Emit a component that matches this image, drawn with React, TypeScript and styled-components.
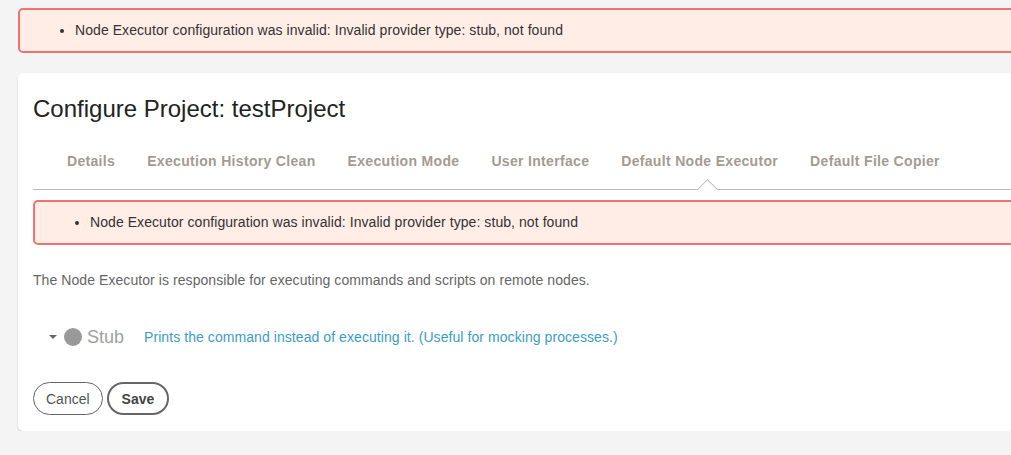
import React from "react";
import styled, { createGlobalStyle } from "styled-components";

const Global = createGlobalStyle`
  html, body { margin: 0; padding: 0; background: #f4f4f4; overflow: hidden; }
  body { font-family: "Liberation Sans", Arial, Helvetica, sans-serif; font-size: 14px; color: #333; letter-spacing: 0.07px; }
  * { box-sizing: border-box; }
`;

const Page = styled.div`
  width: 1100px;
  padding: 8px 0 0 18px;
  display: flex;
  flex-direction: column;
`;

const Alert = styled.div<{ $mb?: number }>`
  background: #ffede6;
  border: 2px solid #f27171;
  border-radius: 5px;
  padding: 10px 15px;
  margin-bottom: ${(p) => p.$mb ?? 0}px;
`;

const AlertList = styled.ul`
  margin: 0;
  padding-left: 40px;
  line-height: 21px;
  color: #333;
`;

const Card = styled.div`
  background: #fff;
  border-radius: 5px;
  box-shadow: 0 1px 2px rgba(0, 0, 0, 0.15);
  padding: 18px 15px 16px 15px;
`;

const Title = styled.h2`
  margin: 0;
  font-size: 24px;
  font-weight: 400;
  line-height: 36px;
  color: #222;
  letter-spacing: 0;
`;

const TabBar = styled.ul`
  list-style: none;
  margin: 14px 0 0 0;
  padding: 0 0 0 18px;
  display: flex;
  border-bottom: 1px solid #bbb;
  height: 49px;
`;

const Tab = styled.li<{ $active?: boolean }>`
  position: relative;
  padding: 0 16px;
  font-weight: 700;
  font-size: 14px;
  letter-spacing: 0.32px;
  color: #a59b92;
  line-height: 40px;
  &::after {
    content: "";
    display: ${(p) => (p.$active ? "block" : "none")};
    position: absolute;
    left: 50%;
    bottom: -8px;
    width: 14px;
    height: 14px;
    background: #fff;
    border-left: 1px solid #bbb;
    border-top: 1px solid #bbb;
    transform: rotate(45deg);
  }
`;

const TabContent = styled.div`
  padding-top: 10px;
`;

const Description = styled.p`
  margin: 25px 0 0 0;
  line-height: 20px;
  color: #666;
`;

const PluginRow = styled.div`
  display: flex;
  align-items: center;
  margin-top: 35px;
  padding-left: 16px;
  height: 24px;
`;

const Caret = styled.span`
  width: 0;
  height: 0;
  border-left: 4px solid transparent;
  border-right: 4px solid transparent;
  border-top: 4px solid #666;
  margin-right: 7px;
`;

const Dot = styled.span`
  width: 18px;
  height: 18px;
  border-radius: 50%;
  background: #999;
  margin-right: 5px;
`;

const PluginName = styled.span`
  font-size: 18px;
  color: #a0a0a0;
  margin-right: 20px;
  letter-spacing: 0;
`;

const PluginDesc = styled.span`
  color: #3a9dc6;
  font-size: 14px;
`;

const Buttons = styled.div`
  display: flex;
  gap: 4px;
  margin-top: 33px;
`;

const Button = styled.button<{ $primary?: boolean }>`
  height: 33px;
  border-radius: 17px;
  background: #fff;
  font-family: inherit;
  font-size: 14px;
  letter-spacing: 0;
  padding: 0 ${(p) => (p.$primary ? 13 : 12)}px;
  border: ${(p) => (p.$primary ? "2px solid #666" : "1px solid #666")};
  color: ${(p) => (p.$primary ? "#444" : "#555")};
  font-weight: ${(p) => (p.$primary ? 700 : 400)};
  cursor: pointer;
`;

const tabs = [
  "Details",
  "Execution History Clean",
  "Execution Mode",
  "User Interface",
  "Default Node Executor",
  "Default File Copier",
];

const message = "Node Executor configuration was invalid: Invalid provider type: stub, not found";

export default function App() {
  return (
    <>
      <Global />
      <Page>
        <Alert $mb={20}>
          <AlertList>
            <li>{message}</li>
          </AlertList>
        </Alert>
        <Card>
          <Title>Configure Project: testProject</Title>
          <TabBar>
            {tabs.map((t) => (
              <Tab key={t} $active={t === "Default Node Executor"}>
                {t}
              </Tab>
            ))}
          </TabBar>
          <TabContent>
            <Alert>
              <AlertList>
                <li>{message}</li>
              </AlertList>
            </Alert>
            <Description>
              The Node Executor is responsible for executing commands and scripts on remote nodes.
            </Description>
            <PluginRow>
              <Caret />
              <Dot />
              <PluginName>Stub</PluginName>
              <PluginDesc>Prints the command instead of executing it. (Useful for mocking processes.)</PluginDesc>
            </PluginRow>
            <Buttons>
              <Button>Cancel</Button>
              <Button $primary>Save</Button>
            </Buttons>
          </TabContent>
        </Card>
      </Page>
    </>
  );
}
